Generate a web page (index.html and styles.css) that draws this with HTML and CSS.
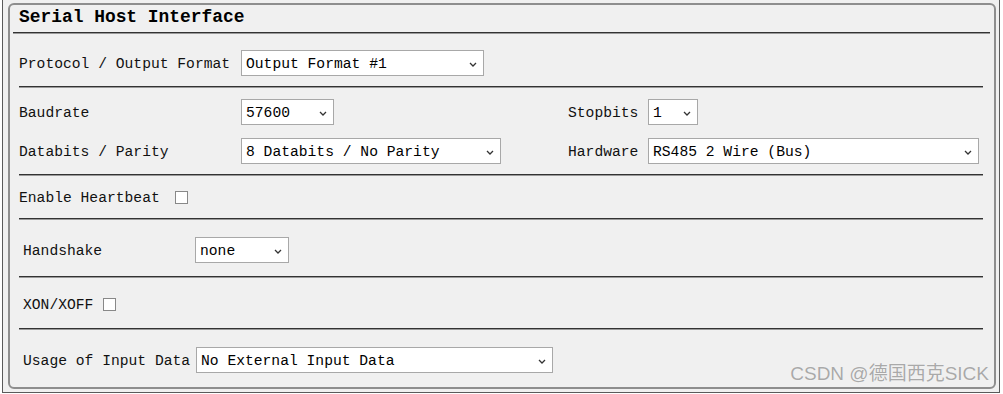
FILE: index.html
```html
<!doctype html>
<html lang="en">
  <head>
    <meta charset="utf-8" />
    <title>Serial Host Interface</title>
    <link rel="stylesheet" href="styles.css">
  </head>
  <body>
    <div class="frame">
      <div class="panel">
        <div class="title">Serial Host Interface</div>
        <div class="rule rule-top"></div>
        <div class="content">
          <div class="sec sec-protocol">
            <div class="row">
              <span class="lbl lbl-wide">Protocol / Output Format</span>
              <label class="pick pick-format">
                <select><option>Output Format #1</option></select>
                <svg class="chev" viewBox="0 0 8 5"><path d="M1 1l3 3 3-3" /></svg>
              </label>
            </div>
          </div>
          <div class="rule"></div>
          <div class="sec sec-serial">
            <div class="grid">
              <span class="lbl">Baudrate</span>
              <span class="cell">
                <label class="pick pick-baud">
                  <select><option>57600</option></select>
                  <svg class="chev" viewBox="0 0 8 5"><path d="M1 1l3 3 3-3" /></svg>
                </label>
              </span>
              <span class="lbl">Stopbits</span>
              <span class="cell">
                <label class="pick pick-stop">
                  <select><option>1</option></select>
                  <svg class="chev" viewBox="0 0 8 5"><path d="M1 1l3 3 3-3" /></svg>
                </label>
              </span>
              <span class="lbl">Databits / Parity</span>
              <span class="cell">
                <label class="pick pick-data">
                  <select><option>8 Databits / No Parity</option></select>
                  <svg class="chev" viewBox="0 0 8 5"><path d="M1 1l3 3 3-3" /></svg>
                </label>
              </span>
              <span class="lbl">Hardware</span>
              <span class="cell">
                <label class="pick pick-hw">
                  <select><option>RS485 2 Wire (Bus)</option></select>
                  <svg class="chev" viewBox="0 0 8 5"><path d="M1 1l3 3 3-3" /></svg>
                </label>
              </span>
            </div>
          </div>
          <div class="rule"></div>
          <div class="sec sec-heart">
            <div class="row">
              <span class="lbl">Enable Heartbeat</span>
              <input type="checkbox" class="check check-heart" />
            </div>
          </div>
          <div class="rule"></div>
          <div class="sec sec-hand inset">
            <div class="row">
              <span class="lbl lbl-hand">Handshake</span>
              <label class="pick pick-hand">
                <select><option>none</option></select>
                <svg class="chev" viewBox="0 0 8 5"><path d="M1 1l3 3 3-3" /></svg>
              </label>
            </div>
          </div>
          <div class="rule"></div>
          <div class="sec sec-xon inset">
            <div class="row">
              <span class="lbl">XON/XOFF</span>
              <input type="checkbox" class="check check-xon" />
            </div>
          </div>
          <div class="rule"></div>
          <div class="sec sec-usage inset">
            <div class="row">
              <span class="lbl lbl-usage">Usage of Input Data</span>
              <label class="pick pick-usage">
                <select><option>No External Input Data</option></select>
                <svg class="chev" viewBox="0 0 8 5"><path d="M1 1l3 3 3-3" /></svg>
              </label>
            </div>
          </div>
        </div>
      </div>
      <div class="mark">CSDN @德国西克SICK</div>
    </div>
  </body>
</html>
```

FILE: styles.css
```css
body {
  margin: 0;
  background: #fff;
  font-family: "Liberation Mono", monospace;
  font-size: 14.67px;
  color: #111;
}
.frame {
  position: relative;
  box-sizing: border-box;
  width: 998px;
  height: 393px;
  margin-left: 2px;
  padding-top: 3px;
  background: #f0f0f0;
  border: 1px solid #5a5a5a;
  border-top: none;
}
.panel {
  margin: 0 3px 0 5px;
  border: 2px solid #8e8e8e;
  border-radius: 6px;
}
.title {
  height: 27px;
  padding-left: 9px;
  line-height: 24px;
  font-size: 17.9px;
  font-weight: bold;
  color: #000;
}
.rule {
  border-top: 1px solid #333;
  border-bottom: 1px solid #9a9a9a;
}
.rule-top {
  margin: 0 4px 0 3px;
}
.content {
  margin: 0 11px 0 9px;
}
.row {
  display: flex;
  align-items: center;
  height: 26px;
}
.lbl {
  padding-top: 2px;
}
.sec-protocol {
  padding: 16px 0 10px;
}
.sec-serial {
  padding: 11px 0 10px;
}
.sec-heart {
  padding: 8px 0;
}
.sec-hand {
  padding: 17px 0 13px;
}
.sec-xon {
  padding: 13px 0 11px;
}
.sec-usage {
  padding: 17px 0 14px;
}
.sec.inset {
  padding-left: 4px;
}
.grid {
  display: grid;
  grid-template-columns: 222px 327px 80px auto;
  grid-auto-rows: 26px;
  row-gap: 13px;
  align-items: center;
}
.cell {
  display: flex;
}
.lbl-wide {
  width: 222px;
}
.lbl-hand {
  width: 172px;
}
.lbl-usage {
  width: 173px;
}
.pick {
  position: relative;
  display: inline-block;
  height: 26px;
}
.pick select {
  appearance: none;
  box-sizing: border-box;
  width: 100%;
  height: 100%;
  margin: 0;
  padding: 2px 0 0 4px;
  border: 1px solid #a8a8a8;
  border-radius: 0;
  background: #fff;
  font: inherit;
  color: #000;
}
.chev {
  position: absolute;
  right: 7px;
  top: 12px;
  width: 8px;
  height: 5px;
  fill: none;
  stroke: #333;
  stroke-width: 1.3;
  pointer-events: none;
}
.pick-format { width: 243px; }
.pick-baud { width: 93px; }
.pick-stop { width: 50px; }
.pick-data { width: 260px; }
.pick-hw { width: 331px; }
.pick-hand { width: 94px; }
.pick-usage { width: 357px; }
.check {
  appearance: none;
  box-sizing: border-box;
  width: 13px;
  height: 13px;
  margin: 0;
  border: 1px solid #888;
  background: #fff;
}
.check-heart {
  margin-left: 15px;
}
.check-xon {
  margin-left: 10px;
}
.mark {
  position: absolute;
  right: 10px;
  top: 361px;
  line-height: 26px;
  font-family: "Liberation Sans", "Noto Sans CJK SC", sans-serif;
  font-size: 19px;
  color: #a9a9a9;
  text-shadow: 0 0 1px #fff;
}
```
